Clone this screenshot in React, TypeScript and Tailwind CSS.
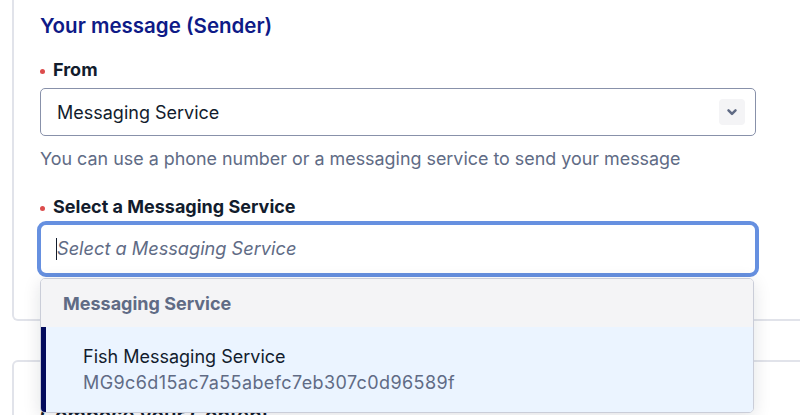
const Required = () => <span className="mr-[8px] inline-block h-[5px] w-[5px] rounded-full bg-[#dc4c4c] align-middle" />;

const ChevronDown = () => (
  <svg width="12" height="12" viewBox="0 0 12 12" fill="none">
    <path d="M2.5 4.3 6 7.8l3.5-3.5" stroke="#606b85" strokeWidth="2.5" strokeLinecap="round" strokeLinejoin="round" />
  </svg>
);

export default function App() {
  return (
    <div className="h-[415px] overflow-hidden bg-white pl-3 font-['Inter','Noto_Sans',sans-serif] text-[#121c2d]">
      {/* Sender card */}
      <div className="w-[800px] rounded-b-[6px] border-2 border-t-0 border-[#e1e3ea] pb-[42px] pl-[26px] pt-[12px]">
        <h2 className="text-[20.5px] font-semibold leading-[28px] text-[#0e1a87]">Your message (Sender)</h2>

        <label className="mt-[18px] block text-[18px] font-bold leading-[24px]">
          <Required />
          From
        </label>
        <div className="mt-[6px] flex h-[48px] w-[716px] items-center justify-between rounded-[5px] border border-[#8891aa] pl-[16px] pr-[10px]">
          <span className="text-[18px]">Messaging Service</span>
          <span className="flex h-[26px] w-[26px] items-center justify-center rounded-[4px] bg-[#f4f4f6]">
            <ChevronDown />
          </span>
        </div>
        <p className="mt-[11px] text-[17.9px] leading-[24px] text-[#606b85]">
          You can use a phone number or a messaging service to send your message
        </p>

        <label className="mt-[24px] block text-[18px] font-bold leading-[24px]">
          <Required />
          Select a Messaging Service
        </label>
        <div className="relative -ml-[3px] mt-[2px] w-[722px]">
          <div className="flex h-[56px] items-center rounded-[9px] border-4 border-[#6690e0] bg-white pl-[15px]">
            <span className="h-[22px] w-px bg-[#121c2d]" />
            <span className="text-[18.2px] italic text-[#606b85]">Select a Messaging Service</span>
          </div>

          {/* Dropdown listbox */}
          <div className="absolute left-[3px] top-[57px] z-10 w-[714px] overflow-hidden rounded-[5px] border border-[#cacdd8] bg-white shadow-[0_4px_18px_rgba(18,28,45,0.12)]">
            <div className="flex h-[48px] items-center bg-[#f4f4f6] pl-[22px] text-[18px] font-bold text-[#606b85]">
              Messaging Service
            </div>
            <div className="flex h-[85px] flex-col justify-center border-l-[5px] border-[#030b5d] bg-[#ebf4ff] pl-[37px]">
              <span className="text-[18px] leading-[26px]">Fish Messaging Service</span>
              <span className="text-[18px] leading-[26px] tracking-[0.4px] text-[#606b85]">MG9c6d15ac7a55abefc7eb307c0d96589f</span>
            </div>
          </div>
        </div>
      </div>

      {/* Next card */}
      <div className="mt-[39px] w-[800px] rounded-t-[6px] border-2 border-b-0 border-[#e1e3ea] pl-[26px] pt-[40px]">
        <h2 className="text-[20.5px] font-semibold leading-[28px] text-[#121c2d]">Compose your Content</h2>
      </div>
    </div>
  );
}
